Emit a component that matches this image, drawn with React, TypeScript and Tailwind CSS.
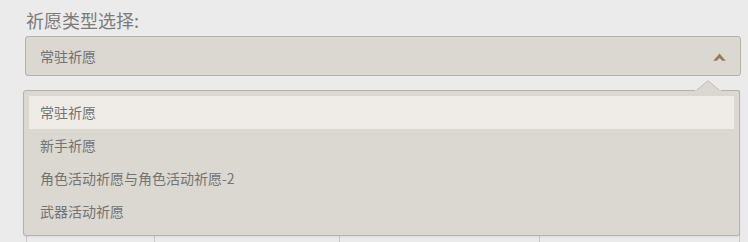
import React from "react";

const FONT = { fontFamily: '"Noto Sans CJK SC", "Liberation Sans", sans-serif' };

const OPTIONS = ["常驻祈愿", "新手祈愿", "角色活动祈愿与角色活动祈愿-2", "武器活动祈愿"];

export default function App() {
  const selected = 0;

  return (
    <div className="relative w-[748px] h-[242px] overflow-hidden bg-[#ebebeb]" style={FONT}>
      <div className="px-[25px] pt-[8px]">
        <div className="pl-[1px] text-[18px] leading-[25px] text-[#7b7b7b]">祈愿类型选择:</div>

        {/* select box */}
        <div className="mt-[3px] flex h-[40px] w-[716px] items-center justify-between rounded-[3px] border border-[#b6b2ab] bg-[#dbd7d1] pl-[14px] pr-[14px]">
          <span className="text-[14px] text-[#727272]">{OPTIONS[selected]}</span>
          <svg width="13" height="8" viewBox="0 0 13 8" className="mt-[2px]">
            <path d="M0.3 7.8 L6.5 0.6 L12.7 7.8 L9.2 7.8 L6.5 5 L3.8 7.8 Z" fill="#9b7a58" />
          </svg>
        </div>

        {/* table underneath */}
        <div className="mt-[14px] flex h-[160px] w-[715px] border-t border-[#c9c9c9] pl-[1px]">
          <div className="w-[129px] border-l border-r border-[#c9c9c9]" />
          <div className="w-[185px] border-r border-[#c9c9c9]" />
          <div className="w-[200px] border-r border-[#c9c9c9]" />
          <div className="flex-1 border-r border-[#c9c9c9]" />
        </div>
      </div>

      {/* pointer */}
      <svg className="absolute left-[695px] top-[80px]" width="26" height="12" viewBox="0 0 26 12">
        <path d="M0 11.5 L13 0.7 L26 11.5" fill="#dbd7d1" stroke="#c2beb7" strokeWidth="1" />
      </svg>

      {/* dropdown menu */}
      <div className="absolute left-[23px] top-[90px] w-[717px] rounded-[3px] border border-[#b6b2ab] bg-[#dbd7d1] px-[5px] pt-[5px] pb-[7px] shadow-[0_1px_2px_rgba(0,0,0,0.08)]">
        <div className="absolute left-[671px] top-[-1px] h-[2px] w-[26px] bg-[#dbd7d1]" />
        {OPTIONS.map((o, i) => (
          <div
            key={o}
            className={`flex h-[33px] items-center pl-[11px] text-[14px] text-[#747474] ${i === selected ? "bg-[#efece7]" : ""}`}
          >
            {o}
          </div>
        ))}
      </div>
    </div>
  );
}
